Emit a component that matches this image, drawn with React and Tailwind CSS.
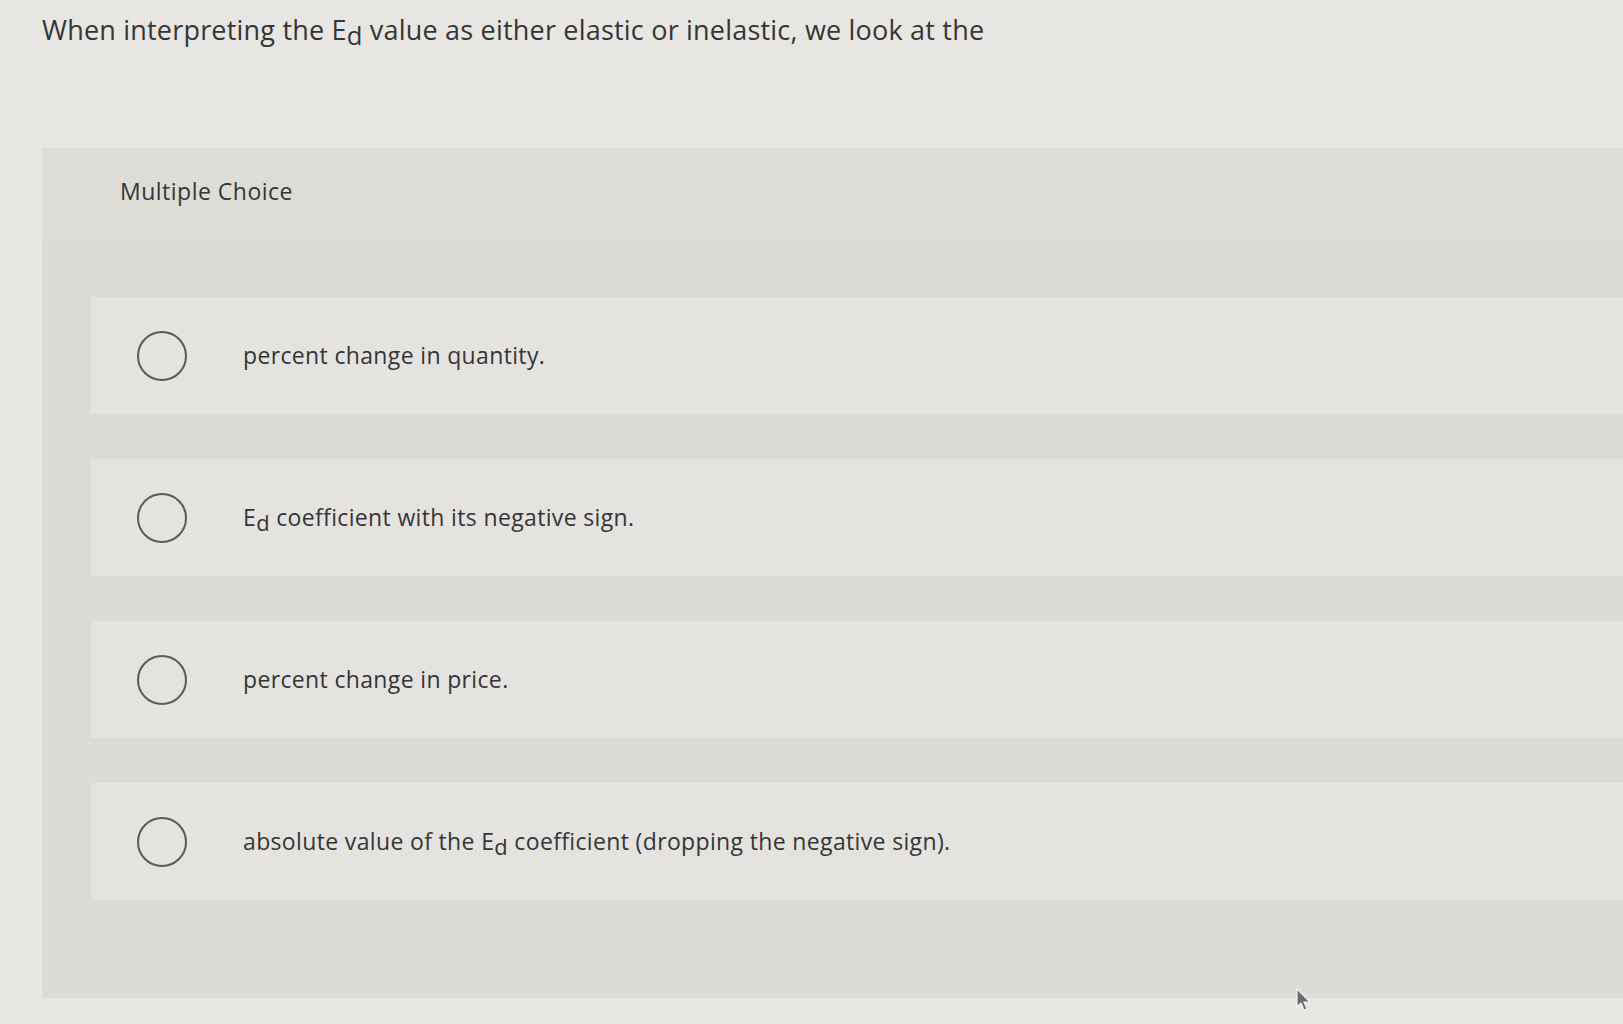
import React from "react";

const font = { fontFamily: "'Open Sans', Lato, sans-serif" };

function Ed() {
  return (
    <span>
      E<sub className="text-[0.95em] relative top-[0.2em] align-baseline">d</sub>
    </span>
  );
}

const options = [
  <>percent change in quantity.</>,
  <>
    <Ed /> coefficient with its negative sign.
  </>,
  <>percent change in price.</>,
  <>
    absolute value of the <Ed /> coefficient (dropping the negative sign).
  </>,
];

export default function App() {
  return (
    <div className="relative w-[1623px] h-[1024px] overflow-hidden bg-[#e7e6e2] text-[#363537]" style={font}>
      <div className="pl-[42px] pt-[10px] h-[148px] text-[27px] font-medium tracking-[0.2px]">
        When interpreting the <Ed /> value as either elastic or inelastic, we look at the
      </div>
      <div className="ml-[42px] h-[850px] bg-[#dcdbd6]">
        <div className="h-[92px] pl-[78px] pt-[26px] text-[23px] font-medium tracking-[0.5px] bg-[#dddcd7]">Multiple Choice</div>
        <div className="flex flex-col gap-[45px] pl-[49px] pt-[57px]">
          {options.map((text, i) => (
            <div key={i} className="h-[117px] bg-[#e4e3df] flex items-center">
              <div className="w-[50px] h-[50px] ml-[46px] rounded-full border-2 border-[#5a595b]" />
              <div className="ml-[56px] text-[23px] font-medium tracking-[0.35px]">{text}</div>
            </div>
          ))}
        </div>
      </div>
      <svg className="absolute left-[1295px] top-[987px]" width="18" height="26" viewBox="0 0 18 26">
        <path d="M2 2 L2 20 L6 16 L9 23 L12 22 L9 15 L15 15 Z" fill="#6b6b6d" stroke="#f2f2f0" strokeWidth="1.2" />
      </svg>
    </div>
  );
}
